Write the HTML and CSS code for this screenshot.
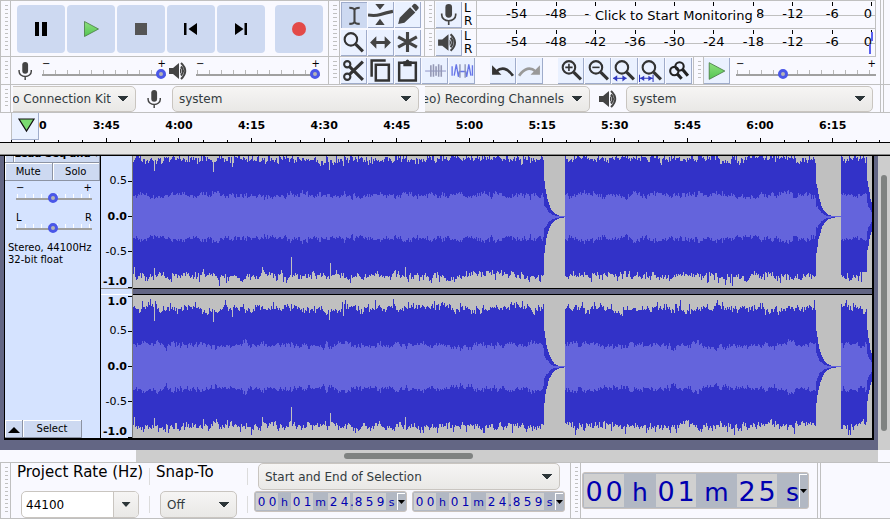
FILE: index.html
```html
<!DOCTYPE html>
<html lang="en">
<head>
<meta charset="utf-8">
<title>Audio editor</title>
<link rel="stylesheet" href="styles.css">
</head>
<body>
<svg class="defs" aria-hidden="true">
  <defs>
    <linearGradient id="green" x1="0" y1="0" x2="0" y2="1"><stop offset="0" stop-color="#8ee07e"/><stop offset="1" stop-color="#53c552"/></linearGradient>
    <symbol id="mic" viewBox="0 0 18 22"><rect x="6" y="1" width="6.400" height="13" rx="3.200" fill="#444"/><path d="M2.500 10v1.500a6.700 5.500 0 0 0 13.400 0V10M9.200 17v4" fill="none" stroke="#444" stroke-width="1.600"/></symbol>
    <symbol id="speaker" viewBox="0 0 20 20"><path d="M1 7h4l6-5v16l-6-5H1z" fill="#444"/><path d="M12 7q3 3 0 6z" fill="#444"/><path d="M13 5.500q4 4.500 0 9M13 2q8.500 8 0 16" fill="none" stroke="#444" stroke-width="2"/></symbol>
    <symbol id="lens" viewBox="0 0 24 24"><circle cx="9.500" cy="9" r="6" fill="none" stroke="#333" stroke-width="2"/><path d="M14 13.500l7 7" stroke="#333" stroke-width="3"/></symbol>
  </defs>
</svg>

<header class="dock">
  <div class="dock-left">
    <section class="bar transport">
      <i class="grip"></i>
      <div class="transport-buttons">
        <button class="big" aria-label="Pause"><svg viewBox="0 0 48 48"><path d="M18 17h4v14h-4zM25 17h5v14h-5z"/></svg></button>
        <button class="big" aria-label="Play"><svg viewBox="0 0 48 48"><path d="M17.500 16.500v15l14-7.500z" fill="url(#green)" stroke="#477a43" stroke-width=".8"/></svg></button>
        <button class="big" aria-label="Stop"><svg viewBox="0 0 48 48"><path d="M18 18h12v12H18z" fill="#555"/></svg></button>
        <button class="big" aria-label="Skip to start"><svg viewBox="0 0 48 48"><path d="M17 18h2.500v12H17zM30 18v12l-8.500-6z"/></svg></button>
        <button class="big" aria-label="Skip to end"><svg viewBox="0 0 48 48"><path d="M27.500 18H30v12h-2.500zM18 18v12l8.500-6z"/></svg></button>
        <button class="big record" aria-label="Record"><svg viewBox="0 0 48 48"><circle cx="24" cy="24" r="7" fill="#e34a48"/></svg></button>
      </div>
    </section>
    <section class="bar mixer">
      <i class="grip"></i>
      <svg class="glyph"><use href="#mic"/></svg>
      <div class="slider"><span>−</span><span>+</span><input type="range" value="100" aria-label="Recording volume"></div>
      <svg class="glyph"><use href="#speaker"/></svg>
      <div class="slider"><span>−</span><span>+</span><input type="range" value="100" aria-label="Playback volume"></div>
    </section>
  </div>

  <div class="dock-right">
    <div class="upper">
      <section class="bar tools">
        <i class="grip"></i>
        <div class="tool-grid">
          <button class="tool on" aria-label="Selection"><svg viewBox="0 0 24 24"><path d="M7 4.500q5 0 5 2.500 0-2.500 5-2.500M12 6v13M7 20q5 0 5-2.500 0 2.500 5 2.500" fill="none" stroke="#444" stroke-width="2"/></svg></button>
          <button class="tool" aria-label="Envelope"><svg viewBox="0 0 24 24"><path d="M7 2h9l-4.500 5.500zM7 22h9l-4.500-6z" fill="#444"/><path d="M0 12.500q7 1 12-.5t12-3" fill="none" stroke="#444" stroke-width="3"/></svg></button>
          <button class="tool" aria-label="Draw"><svg viewBox="0 0 24 24"><path d="M3 21l1.500-6L14.500 5l5 5L9 20zM16 4l2-2q1-1 2.500.5l2 2q1 1-.5 2.500L20 9z" fill="#444"/></svg></button>
          <button class="tool" aria-label="Zoom"><svg viewBox="0 0 24 24"><use href="#lens"/></svg></button>
          <button class="tool" aria-label="Time shift"><svg viewBox="0 0 24 24"><path d="M2 12l6-6v4.500h8V6l6 6-6 6v-4.500H8V18z" fill="#444"/></svg></button>
          <button class="tool" aria-label="Multi tool"><svg viewBox="0 0 24 24"><path d="M12 2v19M3 6.500l18 10M21 6.500l-18 10" stroke="#444" stroke-width="3"/></svg></button>
        </div>
      </section>
      <div class="meters">
        <section class="bar meter-bar">
          <i class="grip"></i>
          <button class="tool" aria-label="Recording meter"><svg viewBox="0 0 24 24"><use href="#mic" x="2" y="1" width="20" height="22"/></svg></button>
          <div class="lr"><span>L</span><span>R</span></div>
          <div class="meter">
            <ol><li>-54</li><li>-48</li><li class="start">-</li><li></li><li></li><li></li><li class="end">8</li><li>-12</li><li>-6</li></ol><span class="zero">0</span>
            <button class="monitor">Click to Start Monitoring</button>
          </div>
        </section>
        <section class="bar meter-bar">
          <i class="grip"></i>
          <button class="tool" aria-label="Playback meter"><svg viewBox="0 0 24 24"><use href="#speaker" x="1" y="2" width="20" height="20"/></svg></button>
          <div class="lr"><span>L</span><span>R</span></div>
          <div class="meter">
            <ol><li>-54</li><li>-48</li><li>-42</li><li>-36</li><li>-30</li><li>-24</li><li>-18</li><li>-12</li><li>-6</li></ol><span class="zero">0</span>
            <svg class="peak" viewBox="0 0 4 26"><path d="M3 3v9M1 15v10" stroke="#5a60f0" stroke-width="2"/></svg>
          </div>
        </section>
      </div>
    </div>
    <section class="bar edit">
      <i class="grip"></i>
      <div class="group first">
        <button class="tool" aria-label="Cut"><svg viewBox="0 0 24 24"><g fill="none" stroke="#333" stroke-width="2"><circle cx="6" cy="6" r="3"/><circle cx="6" cy="18" r="3"/></g><path d="M8 8L21 21M8 16L21 3.500" stroke="#333" stroke-width="3"/></svg></button>
        <button class="tool" aria-label="Copy"><svg viewBox="0 0 24 24"><path d="M3.500 18V2.500H17M7.500 6.500H20v15H7.500z" fill="none" stroke="#333" stroke-width="2.400"/></svg></button>
        <button class="tool" aria-label="Paste"><svg viewBox="0 0 24 24"><path d="M4 4.500h16v17H4z" fill="none" stroke="#333" stroke-width="2.400"/><path d="M8 8h8V3h-2q-2-3-4 0H8z" fill="#333"/></svg></button>
        <button class="tool" aria-label="Trim"><svg viewBox="0 0 24 24"><path d="M3 12.500h20" stroke="#9296c8"/><path d="M8.500 7v11M11 6v12M13.500 8v9M16 6v12M18.500 7v11" stroke="#9397b4" stroke-width="1.500"/></svg></button>
        <button class="tool" aria-label="Silence"><svg viewBox="0 0 24 24"><path d="M3 8v9M5 17l2-11 2 12 1-5h6l1 5 2-12 2 11M22.500 7v10" fill="none" stroke="#6675e8" stroke-width="1.300"/><path d="M10.500 6v13M15.500 6v13" stroke="#8b93b4" stroke-width="1.300"/></svg></button>
      </div>
      <div class="group">
        <button class="tool" aria-label="Undo"><svg viewBox="0 0 24 24"><path d="M2 7v9h9z" fill="#333"/><path d="M6 13q8-7 16 4" fill="none" stroke="#333" stroke-width="2.600"/></svg></button>
        <button class="tool" aria-label="Redo"><svg viewBox="0 0 24 24"><path d="M22 7v9h-9z" fill="#999"/><path d="M18 13q-8-7-16 4" fill="none" stroke="#999" stroke-width="2.600"/></svg></button>
      </div>
      <div class="group last">
        <button class="tool" aria-label="Zoom in"><svg viewBox="0 0 24 24"><use href="#lens" x="1"/><path d="M7 9h7M10.500 5.500v7" stroke="#333" stroke-width="1.500"/></svg></button>
        <button class="tool" aria-label="Zoom out"><svg viewBox="0 0 24 24"><use href="#lens" x="1"/><path d="M7 9h7" stroke="#333" stroke-width="1.500"/></svg></button>
        <button class="tool" aria-label="Fit selection"><svg viewBox="0 0 24 24"><use href="#lens"/><path d="M1 19.500h13" stroke="#3038c0"/><path d="M5 16.500v6l-4-3zM10 16.500v6l4-3z" fill="#3038c0"/></svg></button>
        <button class="tool" aria-label="Fit project"><svg viewBox="0 0 24 24"><use href="#lens"/><path d="M.5 16v7M13.500 16v7M1 19.500h12" stroke="#3038c0"/><path d="M1 19.500l4-2.500v5zM13 19.500l-4-2.500v5z" fill="#3038c0"/></svg></button>
        <button class="tool" aria-label="Zoom toggle"><svg viewBox="0 0 24 24"><g fill="none" stroke="#222" stroke-width="2"><circle cx="8" cy="12.500" r="4"/><circle cx="13" cy="8" r="4"/><path d="M11 15.500l4 4.500M16 11l5 6" stroke-width="3"/></g></svg></button>
      </div>
      <i class="grip"></i>
      <button class="tool" aria-label="Play at speed"><svg viewBox="0 0 24 24"><path d="M5 4.500v16l15-8z" fill="url(#green)" stroke="#477a43" stroke-width=".8"/></svg></button>
      <div class="slider speed"><span>−</span><span>+</span><input type="range" value="32" aria-label="Playback speed"></div>
    </section>
  </div>
  <i class="dock-end"></i>
</header>

<section class="bar devices">
  <i class="grip"></i>
  <div class="cut host"><select class="drop" aria-label="Audio host"><option>JACK Audio Connection Kit</option></select></div>
  <svg class="glyph"><use href="#mic"/></svg>
  <select class="drop device" aria-label="Recording device"><option>system</option></select>
  <div class="cut channels"><select class="drop" aria-label="Recording channels"><option>2 (Stereo) Recording Channels</option></select></div>
  <svg class="glyph"><use href="#speaker"/></svg>
  <select class="drop device" aria-label="Playback device"><option>system</option></select>
  <i class="dock-end"></i>
</section>

<section class="timeline">
  <div class="times">
    <div class="lead"><button class="pin" aria-label="Pinned play head"><svg viewBox="0 0 26 26"><path d="M7 6h15l-7.500 12z" fill="#7adb70" stroke="#111" stroke-width="1.200"/></svg></button><span>0</span></div>
    <ol><li>3:45</li><li>4:00</li><li>4:15</li><li>4:30</li><li>4:45</li><li>5:00</li><li>5:15</li><li>5:30</li><li>5:45</li><li>6:00</li><li>6:15</li></ol>
  </div>
  <div class="ticks">
    <div class="lead"><i></i><i></i><i></i></div>
    <div class="all"><b><i></i><i></i><i></i></b><b><i></i><i></i><i></i></b><b><i></i><i></i><i></i></b><b><i></i><i></i><i></i></b><b><i></i><i></i><i></i></b><b><i></i><i></i><i></i></b><b><i></i><i></i><i></i></b><b><i></i><i></i><i></i></b><b><i></i><i></i><i></i></b><b><i></i><i></i><i></i></b><b><i></i><i></i><i></i></b></div>
    <div class="tail"><i></i></div>
  </div>
  <div class="scrub"></div>
</section>

<main class="workspace">
  <div class="view">
    <article class="track">
      <aside class="panel">
        <div class="title"><button aria-label="Close track">✕</button><button>Lead Seq and ▾</button></div>
        <div class="pair"><button>Mute</button><button>Solo</button></div>
        <div class="slider knob gain"><span>−</span><span>+</span><input type="range" value="49" aria-label="Gain"></div>
        <div class="slider knob pan"><span>L</span><span>R</span><input type="range" value="49" aria-label="Pan"></div>
        <p>Stereo, 44100Hz<br>32-bit float</p>
        <div class="foot"><button aria-label="Collapse"><svg viewBox="0 0 12 6"><path d="M0 6h12L6 0z"/></svg></button><button>Select</button></div>
      </aside>
      <div class="channels-area">
        <div class="channel">
          <ol class="scale"><li></li><li>0.5</li><li>0.0</li><li>-0.5</li><li>-1.0</li></ol>
          <svg class="wave" viewBox="0 0 739 143" preserveAspectRatio="none" data-seed="11"></svg>
        </div>
        <div class="divider"><i></i><b></b></div>
        <div class="channel">
          <ol class="scale"><li>1.0</li><li>0.5</li><li>0.0</li><li>-0.5</li><li>-1.0</li></ol>
          <svg class="wave" viewBox="0 0 739 143" preserveAspectRatio="none" data-seed="37"></svg>
        </div>
      </div>
    </article>
  </div>
  <div class="vscroll"><i></i></div>
</main>
<div class="hscroll"><div><i></i></div></div>

<footer class="bottom">
  <i class="grip"></i>
  <div class="field rate">
    <label for="rate">Project Rate (Hz)</label>
    <div class="combo"><input id="rate" value="44100"><button aria-label="Choose rate"><i class="arrow"></i></button></div>
  </div>
  <div class="sep"><i></i><i></i></div>
  <div class="field snap">
    <label for="snap">Snap-To</label>
    <select class="drop" id="snap"><option>Off</option></select>
  </div>
  <div class="sep"><i></i><i></i></div>
  <div class="selection">
    <select class="drop" aria-label="Selection mode"><option>Start and End of Selection</option></select>
    <div class="timecodes">
      <div class="timecode"><b>0</b><b>0</b><span>h</span><b>0</b><b>1</b><span>m</span><b>2</b><b>4</b><em>.</em><b>8</b><b>5</b><b>9</b><span>s</span><button aria-label="Start format"><i class="arrow"></i></button></div>
      <div class="timecode"><b>0</b><b>0</b><span>h</span><b>0</b><b>1</b><span>m</span><b>2</b><b>4</b><em>.</em><b>8</b><b>5</b><b>9</b><span>s</span><button aria-label="End format"><i class="arrow"></i></button></div>
    </div>
  </div>
  <i class="grip"></i>
  <div class="position">
    <div class="timecode large"><b>0</b><b>0</b><span>h</span><b>0</b><b>1</b><span>m</span><b>2</b><b>5</b><span>s</span><button aria-label="Position format"><i class="arrow"></i></button></div>
  </div>
  <i class="bottom-end"></i>
</footer>
<script src="script.js"></script>
</body>
</html>
```
FILE: styles.css
```css
* { box-sizing: border-box; }
html, body { height: 100%; }
body {
  margin: 0;
  display: flex;
  flex-direction: column;
  overflow: hidden;
  background: #f9f9ff;
  color: #000;
  font-family: "DejaVu Sans", sans-serif;
  font-size: 12px;
}
ol { list-style: none; margin: 0; padding: 0; }
button { font: inherit; color: inherit; padding: 0; margin: 0; border: 0; background: none; }
svg { display: block; }
.defs { position: absolute; width: 0; height: 0; }

/* Toolbars */
.bar { display: flex; align-items: center; border-top: 1px solid #c0c0c0; }
.grip {
  flex: none;
  align-self: stretch;
  width: 11px;
  padding: 4px 2px 4px 4px;
  border-right: 1px solid #c0c0c0;
  border-left: 1px solid #c0c0c0;
  background: repeating-linear-gradient(#c0c0c0 0 1px, transparent 1px 4px) content-box;
}
.dock { display: flex; flex: none; }
.dock-left { flex: none; width: 329px; border-right: 1px solid #c0c0c0; }
.dock-right { flex: 1; min-width: 0; }
.dock-end { flex: none; width: 4px; margin-left: 4px; margin-right: 6px; align-self: stretch; border: solid #c0c0c0; border-width: 0 1px; }
.transport { height: 56px; }
.mixer, .edit { height: 28px; }
.transport-buttons { display: flex; gap: 2px; padding-left: 6px; }
.big { width: 48px; height: 48px; border-radius: 4px; background: #cdd9f1; }
.record { margin-left: 8px; }
.glyph { flex: none; width: 20px; height: 20px; }
.mixer .glyph:first-of-type { margin-left: 4px; }

.slider { display: grid; grid-template-columns: 1fr 1fr; font-size: 10px; line-height: 8px; height: 22px; align-content: start; }
.slider span:nth-child(2) { text-align: right; }
.slider input {
  appearance: none;
  grid-column: 1 / 3;
  width: 100%;
  height: 12px;
  margin: -1px 0 0;
  background:
    linear-gradient(#a0a0a0, #a0a0a0) 0 7px / 100% 2px no-repeat,
    linear-gradient(90deg, #b8b8b8 1px, transparent 1px) 1px 3px / 12px 4px repeat-x;
}
.slider input::-webkit-slider-thumb {
  appearance: none;
  width: 10px;
  height: 10px;
  margin-top: 2px;
  border: 3px solid #4a57e8;
  border-radius: 5px;
  background: #b4b4b4;
}
.mixer .slider { width: 124px; margin-left: 7px; }
.mixer .slider + .glyph { margin-left: 2px; }
.mixer .glyph ~ .glyph ~ .slider { margin-left: 8px; }

.upper { display: flex; }
.tools .grip, .edit .grip:first-child { border-left: 0; }
.tools { flex: none; height: 56px; }
.tool-grid { display: grid; grid-template-columns: repeat(3, 26px); gap: 2px 1px; padding: 0 3px 0 1px; }
.tool { flex: none; width: 26px; height: 26px; background: #eaf1ff; border: solid #9faccb; border-width: 0 1px 1px 0; }
.tool.on { background: #cdd9f1; border-width: 1px 0 0 1px; }
.meters { flex: 1; min-width: 0; }
.meter-bar { height: 28px; }
.meter-bar .tool { margin-left: 1px; }
.lr { flex: none; width: 14px; padding-left: 2px; display: flex; flex-direction: column; font-size: 12px; line-height: 13px; }
.meter {
  position: relative;
  flex: 1;
  display: flex;
  height: 27px;
  padding-left: 20px;
  border: solid #c0c0c0;
  border-width: 0 1px;
  background: linear-gradient(#c0c0c0, #c0c0c0) 0 14px / 100% 1px no-repeat;
  font-size: 13px;
  line-height: 16px;
}
.meter ol { flex: 1; display: grid; grid-template-columns: repeat(9, 1fr); justify-items: center; }
.meter li, .zero { padding-top: 5px; background: linear-gradient(#000, #000) center 1px / 1px 4px no-repeat; }
.meter li { align-self: start; min-width: 22px; min-height: 21px; text-align: center; }
.meter li.start { text-align: left; }
.meter li.end { text-align: right; }
.zero { width: 20px; text-align: right; margin-right: 3px; background-position: right 1px; }
.monitor { position: absolute; left: 114px; top: 6px; padding: 0 4px; background: #f9f9ff; font-size: 13px; line-height: 17px; white-space: nowrap; }
.peak { position: absolute; right: 2px; top: 0; width: 4px; height: 26px; }

.group { display: flex; gap: 1px; margin-right: 15px; }
.group.first { margin-left: 1px; }
.group.last { margin-right: 1px; }
.speed { flex: 1; margin: 0 0 0 6px; }

/* Drop-downs */
.drop {
  appearance: none;
  height: 26px;
  margin: 0;
  padding: 0 24px 0 6px;
  border: 1px solid #c9c5c0;
  border-radius: 5px;
  color: #333b3e;
  font: 12px "DejaVu Sans", sans-serif;
  background:
    linear-gradient(to bottom right, #2c3538 50%, transparent 51%) right 7px center / 5px 5px no-repeat,
    linear-gradient(to bottom left, #2c3538 50%, transparent 51%) right 12px center / 5px 5px no-repeat,
    linear-gradient(#f6f5f4, #e9e8e6);
}
.devices { flex: none; height: 28px; }
.devices .dock-end { margin-left: 7px; }
.cut { display: flex; flex: none; justify-content: flex-end; overflow: hidden; }
.cut .drop { flex: none; }
.host { width: 123px; margin-left: 2px; }
.channels { width: 165px; margin-left: 6px; }
.devices .glyph { margin: 0 8px 0 8px; }
.device { flex: 1; min-width: 0; }

/* Time ruler */
.timeline { flex: none; border-top: 1px solid #c0c0c0; font-size: 11px; font-weight: bold; }
.times { display: flex; height: 25px; padding-right: 21px; line-height: 25px; }
.lead { flex: none; width: 70px; }
.times .lead { display: flex; padding-left: 11px; }
.pin { width: 28px; height: 27px; border: solid #9faccb; border-width: 0 1px 1px; border-left-color: #c0c0c0; background: #eaf1ff; }
.pin svg { width: 26px; height: 26px; }
.times ol { flex: 1; display: grid; grid-template-columns: repeat(11, 1fr); text-align: center; }
.ticks { display: flex; height: 5px; border-bottom: 1px solid #000; }
.ticks .lead, .ticks b, .ticks .tail { display: flex; justify-content: space-around; align-items: flex-end; }
.ticks .all { flex: 1; display: grid; grid-template-columns: repeat(11, 1fr); }
.ticks .tail { width: 21px; }
.ticks i { width: 1px; height: 2px; background: #000; }
.ticks b i:nth-child(2) { height: 4px; }
.scrub { height: 13px; background: #e4e4e4; border-bottom: 1px solid #000; box-shadow: inset 0 -1px #888; }

/* Track area */
.workspace { flex: 1; min-height: 0; display: flex; background: #636684; }
.view { flex: 1; min-width: 0; overflow: hidden; padding: 0 4px; }
.track { display: flex; margin-top: -12px; height: 296px; border: solid #000; border-width: 1px 2px 2px 1px; }
.panel { flex: none; width: 96px; display: flex; flex-direction: column; background: #d5e3ff; border-right: 1px solid #000; font-size: 10px; }
.title, .pair, .foot { display: flex; }
.title button, .pair button, .foot button { background: #cdd9f1; border: solid #8c93a3; border-width: 0 1px 1px 0; box-shadow: inset 1px 1px #fff; }
.title { height: 18px; line-height: 18px; white-space: nowrap; }
.title button:first-child { width: 18px; }
.title button:last-child { flex: 1; }
.title button { font-weight: bold; }
.pair button { flex: 1; height: 18px; line-height: 17px; }
.knob { width: 78px; margin-left: 10px; padding: 0 1px; }
.gain { margin-top: 3px; }
.pan { margin-top: 7px; height: 24px; line-height: 9px; }
.knob input {
  background:
    linear-gradient(#a0a0a0, #a0a0a0) 0 7px / 100% 2px no-repeat,
    linear-gradient(90deg, #fff 1px, transparent 1px) 1px 3px / 8px 4px repeat-x;
}
.panel p { margin: 5px 0 0 3px; line-height: 12px; white-space: nowrap; }
.foot { margin-top: auto; height: 18px; }
.foot button:first-child { width: 18px; padding: 2px 2px 0 3px; }
.foot button:last-child { width: 59px; }
.foot svg { width: 12px; height: 6px; }
.channels-area { flex: 1; min-width: 0; display: flex; flex-direction: column; }
.channel { flex: none; display: flex; height: 143px; background: #c0c0c0; }
.scale {
  flex: none;
  width: 32px;
  display: grid;
  grid-template-rows: 13px 1fr 24px 1fr 13px;
  align-items: center;
  border-right: 1px solid #777;
  background: #d5e3ff;
  font-size: 11px;
  line-height: 12px;
}
.scale li { padding-right: 5px; text-align: right; background: linear-gradient(#000, #000) right center / 4px 1px no-repeat; }
.scale li:nth-child(odd) { font-weight: bold; }
.scale li:first-child { background-position: right top; }
.scale li:last-child { background-position: right bottom; }
.wave { flex: 1; min-width: 0; height: 143px; }
.divider { flex: none; display: flex; height: 7px; }
.divider i { width: 32px; background: #d5e3ff; border: solid #888; border-width: 1px 1px 0 0; box-shadow: inset 0 -1px #fff; }
.divider b { flex: 1; background: #636684; border: solid #000; border-width: 1px 0; }
.outer { fill: #3232c8; }
.inner { fill: #6464dc; }
.vscroll { flex: none; width: 12px; padding: 19px 3px; background: #cdcdcd; display: flex; }
.vscroll i { flex: 1; border-radius: 3px; background: #7f8281; }
.hscroll { flex: none; height: 12px; padding: 0 12px 0 136px; }
.hscroll div { height: 12px; padding-top: 3px; background: #cdcdcd; display: grid; grid-template-columns: 208fr 129fr 405fr; }
.hscroll i { grid-column: 2; height: 6px; border-radius: 3px; background: #7f8281; }

/* Bottom bar */
.bottom { flex: none; display: flex; height: 57px; border: solid #c0c0c0; border-width: 1px 0; }
.field { flex: none; display: flex; flex-direction: column; justify-content: space-between; padding-left: 6px; }
.field label { font-size: 15px; line-height: 18px; white-space: nowrap; }
.rate { width: 138px; }
.combo { display: flex; width: 118px; height: 27px; margin-left: 4px; border: 1px solid #c9c5c0; border-radius: 5px; background: #fff; overflow: hidden; }
.combo input { flex: 1; min-width: 0; border: 0; padding: 0 4px; background: none; font: 12px "DejaVu Sans", sans-serif; }
.combo button { width: 25px; display: grid; place-items: center; border-left: 1px solid #c9c5c0; background: linear-gradient(#f6f5f4, #e9e8e6); }
.arrow { display: block; width: 9px; height: 5px; background: #2c3538; clip-path: polygon(0 0, 100% 0, 50% 100%); }
.snap { width: 97px; }
.snap .drop { width: 77px; height: 27px; margin-left: 4px; }
.sep { flex: none; width: 1px; display: flex; flex-direction: column; justify-content: space-around; }
.sep i { height: 17px; background: #dcdcdc; }
.selection { flex: none; width: 322px; padding-left: 6px; }
.selection .drop { display: block; width: 302px; height: 27px; margin-left: 4px; }
.timecodes { display: flex; gap: 5px; margin-top: 1px; }
.timecode { display: flex; flex: none; width: 153px; height: 21px; padding: 1px; border: 1px solid #c9c2bd; border-radius: 3px; background: #b2b8c3; color: #0000b0; font-size: 12px; line-height: 18px; text-align: center; }
.timecode b { width: 11px; background: #d0d0d0; font-weight: normal; }
.timecode span { flex: 13 0 0; min-width: 0; padding-top: 1px; font-size: 11px; line-height: 18px; }
.timecode span:nth-of-type(2) { flex-grow: 15; }
.timecode span:nth-of-type(3) { flex-grow: 11; }
.timecode em { width: 3px; font-style: normal; }
.timecode button { width: 8px; display: grid; place-items: center; border: solid #fff; border-width: 1px 0 0 1px; }
.timecode .arrow { width: 7px; height: 4px; background: #000; }
.position { flex: none; width: 236px; padding: 9px 0 0 1px; }
.large { width: 227px; height: 37px; font-size: 27px; line-height: 35px; }
.large b { width: 20px; }
.large span { flex-grow: 32; font-size: 25px; line-height: 35px; }
.large span:nth-of-type(2) { flex-grow: 41; }
.large span:nth-of-type(3) { flex-grow: 22; text-align: right; }
.bottom-end { width: 4px; border: solid #c0c0c0; border-width: 0 1px; }
```
FILE: script.js
```js
// Draws each channel: an outer peak envelope and a lighter RMS envelope.
const SPACE = 739;
const MIDDLE = 71.5;
const LOUD = [[0, 411], [432, 683], [708, 734]];
const DIPS_ABOVE = { 21: 46, 80: 45, 99: 50, 196: 47, 210: 51 };
const DIPS_BELOW = { 1: 50, 21: 51, 70: 52, 129: 50, 158: 40, 197: 46, 272: 50 };

function generator(seed) {
  let state = seed;
  return () => {
    state = (state * 16807) % 2147483647;
    return state / 2147483647;
  };
}

function level(x) {
  if (LOUD.some(([from, to]) => x >= from && x < to)) return 1;
  const last = LOUD.filter(([, to]) => x >= to).pop();
  return Math.exp(-(x - last[1]) / 4.5) * 0.6;
}

function envelope(random, base, spread, dips) {
  const values = [];
  let drift = 0;
  for (let x = 0; x < SPACE; x++) {
    drift = drift * 0.7 + (random() - 0.5) * spread;
    let value = base + drift + (random() - 0.5) * spread;
    if (dips && random() < 0.08) value += 5;
    if (dips && dips[x]) value = dips[x];
    values.push(Math.max(0.5, Math.round(value * level(x))));
  }
  return values;
}

function outline(top, bottom) {
  let d = "M0 " + MIDDLE;
  top.forEach((v, x) => { d += `V${MIDDLE - v}H${x + 1}`; });
  for (let x = SPACE - 1; x >= 0; x--) d += `V${MIDDLE + bottom[x]}H${x}`;
  return d + "Z";
}

document.querySelectorAll(".wave").forEach((svg) => {
  const random = generator(Number(svg.dataset.seed) * 7919);
  const inner = envelope(random, 22, 4, null);
  const shapes = [
    ["outer", outline(envelope(random, 58, 5, DIPS_ABOVE), envelope(random, 59, 5, DIPS_BELOW))],
    ["inner", outline(inner, inner)],
  ];
  shapes.forEach(([name, d]) => {
    const path = document.createElementNS("http://www.w3.org/2000/svg", "path");
    path.setAttribute("class", name);
    path.setAttribute("d", d);
    path.setAttribute("shape-rendering", "crispEdges");
    svg.append(path);
  });
});
```
